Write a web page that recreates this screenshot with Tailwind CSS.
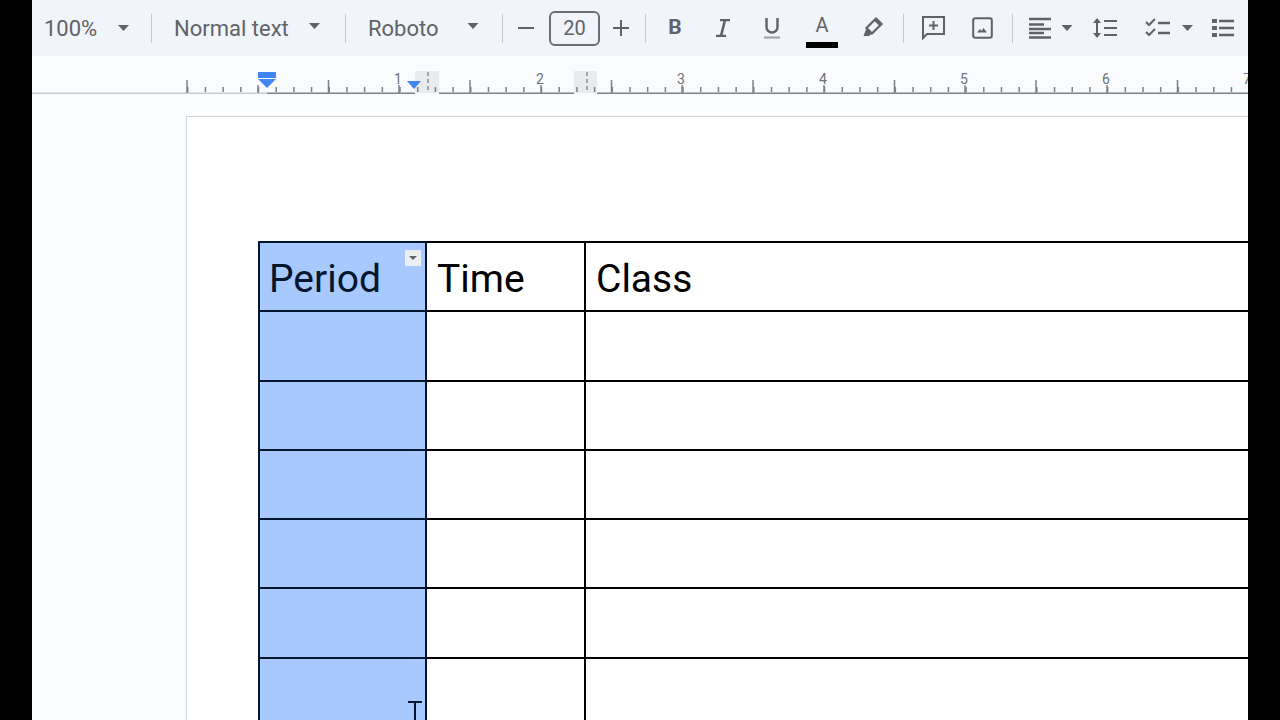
<!DOCTYPE html>
<html lang="en">
  <head>
    <meta charset="UTF-8" />
    <meta name="viewport" content="width=device-width, initial-scale=1.0" />
    <title>Docs table</title>
    <script src="https://cdn.jsdelivr.net/npm/@tailwindcss/browser@4"></script>
  </head>

  <body class="bg-black">
    <div class="mx-8 h-[720px] w-[1216px] overflow-hidden bg-[#f9fbfd] font-['Roboto',sans-serif]">
      <!-- TOOLBAR -->
      <div class="flex h-14 items-center bg-[#f1f4f8] pl-3 text-[22px] text-[#5f6368]">
        <span class="w-[54px] whitespace-nowrap">100%</span>
        <svg class="ml-5 h-[6px] w-[11px]" viewBox="0 0 11 6"><path d="M0 0h11L5.500 6z" fill="#5f6368" /></svg>
        <div class="ml-[22px] h-[29px] w-px bg-[#c7cacd]"></div>

        <span class="ml-[22px] w-[113px] whitespace-nowrap">Normal text</span>
        <svg class="ml-[22px] h-[6px] w-[11px] -translate-y-0.5" viewBox="0 0 11 6"><path d="M0 0h11L5.500 6z" fill="#5f6368" /></svg>
        <div class="ml-[25px] h-[29px] w-px bg-[#c7cacd]"></div>

        <span class="ml-[22px] w-[70px] whitespace-nowrap">Roboto</span>
        <svg class="ml-[29px] h-[6px] w-[12px] -translate-y-0.5" viewBox="0 0 11 6"><path d="M0 0h11L5.500 6z" fill="#5f6368" /></svg>
        <div class="ml-[23px] h-[29px] w-px bg-[#c7cacd]"></div>

        <div class="ml-[15px] h-0.5 w-[16px] bg-[#5f6368]"></div>
        <div class="ml-[15px] flex h-[35px] w-[51px] items-center justify-center rounded-md border-2 border-[#6b6f73] text-[20px]">20</div>
        <svg class="ml-[13px] h-4 w-4" viewBox="0 0 16 16"><path d="M8 0v16M0 8h16" stroke="#5f6368" stroke-width="2" fill="none" /></svg>
        <div class="ml-[16px] h-[29px] w-px bg-[#c7cacd]"></div>

        <span class="ml-[22px] w-[16px] text-center text-[21px] font-bold -translate-x-px">B</span>
        <!-- italic with serifs, underline -->
        <svg class="ml-[31px] h-[18px] w-[16px]" viewBox="0 0 16 18"><path d="M5 1h10M1 17h10M10 1 6 17" stroke="#5f6368" stroke-width="2.600" fill="none" /></svg>
        <svg class="ml-[32px] h-[22px] w-[18px]" viewBox="0 0 18 22"><path d="M3.500 1v9a5.500 5.500 0 0 0 11 0V1" stroke="#5f6368" stroke-width="2.400" fill="none" /><path d="M1 20.500h16" stroke="#9aa0a6" stroke-width="2" /></svg>

        <div class="ml-[25px] flex h-[34px] w-[32px] translate-y-[3px] flex-col items-center justify-between">
          <span class="text-[20px] leading-[22px]">A</span>
          <div class="h-[6px] w-full bg-black"></div>
        </div>
        <svg class="ml-[24px] h-[22px] w-[22px] -translate-y-px" viewBox="0 0 22 22"><path d="M14 2.500 19.500 8 10 17.500 4.500 12z" fill="none" stroke="#5f6368" stroke-width="2.200" /><path d="M15 2.500 19.500 7 17 9.500 12.500 5zM4.500 12 10 17.500 7 20H1.500z" fill="#5f6368" /></svg>
        <div class="ml-[19px] h-[29px] w-px bg-[#c7cacd]"></div>

        <!-- comment + image -->
        <svg class="ml-[17px] h-[26px] w-[25px]" viewBox="0 0 25 26"><path d="M2 2h21v17H6l-4 4z" fill="none" stroke="#5f6368" stroke-width="2" /><path d="M12.500 6v9M8 10.500h9" stroke="#5f6368" stroke-width="2" /></svg>
        <svg class="ml-[26px] h-[22px] w-[21px]" viewBox="0 0 21 22"><rect x="1.200" y="1.200" width="18.600" height="19.600" rx="2" fill="none" stroke="#5f6368" stroke-width="2" /><path d="M5 15.500 8 12l1.500 2 2-3 3.500 4.500z" fill="#5f6368" /></svg>
        <div class="ml-[19px] h-[29px] w-px bg-[#c7cacd]"></div>

        <svg class="ml-4 h-[22px] w-[22px]" viewBox="0 0 22 22"><path d="M0 2h22M0 7.500h15M0 12h22M0 16h15M0 20.500h22" stroke="#5f6368" stroke-width="2.400" /></svg>
        <svg class="ml-[10px] h-[6px] w-[12px]" viewBox="0 0 11 6"><path d="M0 0h11L5.500 6z" fill="#5f6368" /></svg>
        <svg class="ml-5 h-[20px] w-[24px]" viewBox="0 0 24 20"><path d="M4 3v14" stroke="#5f6368" stroke-width="2" /><path d="M0 5 4 0l4 5zM0 15l4 5 4-5z" fill="#5f6368" /><path d="M11 3h13M11 10h13M11 17h13" stroke="#5f6368" stroke-width="2.200" /></svg>
        <svg class="ml-7 h-[20px] w-[25px]" viewBox="0 0 25 20"><path d="m1 4 3 3 6-6M1 14l3 3 6-6" fill="none" stroke="#5f6368" stroke-width="2" /><path d="M13 5h12M13 15h12" stroke="#5f6368" stroke-width="2.400" /></svg>
        <svg class="ml-3 h-[6px] w-[11px]" viewBox="0 0 11 6"><path d="M0 0h11L5.500 6z" fill="#5f6368" /></svg>
        <svg class="ml-[19px] h-[20px] w-[22px]" viewBox="0 0 22 20"><path d="M0 1h5v4H0zM0 8h5v4H0zM0 15h5v4H0z" fill="#5f6368" /><path d="M7 3h15M7 10h15M7 17h15" stroke="#5f6368" stroke-width="2.400" /></svg>
      </div>

      <!-- RULER -->
      <div class="relative h-[38px]">
        <svg class="absolute inset-0 h-[38px] w-[1216px]" viewBox="32 56 1216 38">
          <rect x="415" y="71" width="24" height="22" fill="#e9ebee" />
          <rect x="574" y="71" width="23" height="22" fill="#e9ebee" />
          <path d="M428 72v20M587 72v20" stroke="#8a8d91" stroke-width="1.500" stroke-dasharray="4 3" />
          <!-- baseline -->
          <path d="M32 93.500h235" stroke="#c9cbce" stroke-width="2" />
          <path d="M267 93.500h148M439 93.500h135M597 93.500h651" stroke="#7d8185" stroke-width="2" />
          <!-- eighth ticks -->
          <path d="M187 89.500h1061" stroke="#7d8185" stroke-width="5" stroke-dasharray="1.500 16.190" />
          <!-- half inch ticks -->
          <path d="M187 80v13M328.500 80v13M470 80v13M611.500 80v13M753 80v13M894.500 80v13M1036 80v13M1177.500 80v13" stroke="#7d8185" stroke-width="1.500" />
          <!-- inch ticks -->
          <path d="M258 85v8M399 85v8M541 85v8M682 85v8M824 85v8M965 85v8M1107 85v8" stroke="#7d8185" stroke-width="1.500" />
          <!-- indent markers -->
          <rect x="258" y="72" width="18" height="6" fill="#4285f4" />
          <path d="M258 79h18l-9 9z" fill="#4285f4" />
          <path d="M407 81h14l-7 8z" fill="#4285f4" />
        </svg>
        <span class="absolute left-[362px] top-[14px] text-[14px] leading-[18px] text-[#6e7175]">1</span>
        <span class="absolute left-[504px] top-[14px] text-[14px] leading-[18px] text-[#6e7175]">2</span>
        <span class="absolute left-[645px] top-[14px] text-[14px] leading-[18px] text-[#6e7175]">3</span>
        <span class="absolute left-[787px] top-[14px] text-[14px] leading-[18px] text-[#6e7175]">4</span>
        <span class="absolute left-[928px] top-[14px] text-[14px] leading-[18px] text-[#6e7175]">5</span>
        <span class="absolute left-[1070px] top-[14px] text-[14px] leading-[18px] text-[#6e7175]">6</span>
        <span class="absolute left-[1211px] top-[14px] text-[14px] leading-[18px] text-[#6e7175]">7</span>
      </div>

      <!-- PAGE -->
      <div class="ml-[154px] mt-[22px] h-[700px] border-l border-t border-[#d3d6d9] bg-white pl-[71px] pt-[124px]">
        <table class="w-[1100px] table-fixed border-collapse text-[39px] text-black">
          <colgroup>
            <col class="w-[167px]" />
            <col class="w-[159px]" />
            <col />
          </colgroup>
          <tbody>
            <tr class="h-[69px]">
              <td class="relative border-2 border-[#02142e] bg-[#a7c9fd] pl-[9px] pt-[6px] text-[#03152f]">
                Period
                <div class="absolute right-[4px] top-[7px] flex h-4 w-4 items-center justify-center bg-[#eceff1]">
                  <svg class="h-1 w-2" viewBox="0 0 8 4"><path d="M0 0h8L4 4z" fill="#5f6368" /></svg>
                </div>
              </td>
              <td class="border-2 border-black pl-[10px] pt-[6px]">Time</td>
              <td class="border-2 border-black pl-[10px] pt-[6px]">Class</td>
            </tr>
            <tr class="h-[70px]">
              <td class="border-2 border-[#02142e] bg-[#a7c9fd]"></td>
              <td class="border-2 border-black"></td>
              <td class="border-2 border-black"></td>
            </tr>
            <tr class="h-[69px]">
              <td class="border-2 border-[#02142e] bg-[#a7c9fd]"></td>
              <td class="border-2 border-black"></td>
              <td class="border-2 border-black"></td>
            </tr>
            <tr class="h-[69px]">
              <td class="border-2 border-[#02142e] bg-[#a7c9fd]"></td>
              <td class="border-2 border-black"></td>
              <td class="border-2 border-black"></td>
            </tr>
            <tr class="h-[69px]">
              <td class="border-2 border-[#02142e] bg-[#a7c9fd]"></td>
              <td class="border-2 border-black"></td>
              <td class="border-2 border-black"></td>
            </tr>
            <tr class="h-[70px]">
              <td class="border-2 border-[#02142e] bg-[#a7c9fd]"></td>
              <td class="border-2 border-black"></td>
              <td class="border-2 border-black"></td>
            </tr>
            <tr class="h-[69px]">
              <td class="relative border-2 border-[#02142e] bg-[#a7c9fd]">
                <!-- text cursor -->
                <svg class="absolute left-[148px] top-[42px] h-[24px] w-[14px]" viewBox="0 0 14 24"><path d="M0 1h14M7 1v23" stroke="#03152f" stroke-width="2" /></svg>
              </td>
              <td class="border-2 border-black"></td>
              <td class="border-2 border-black"></td>
            </tr>
          </tbody>
        </table>
      </div>
    </div>
  </body>
</html>
